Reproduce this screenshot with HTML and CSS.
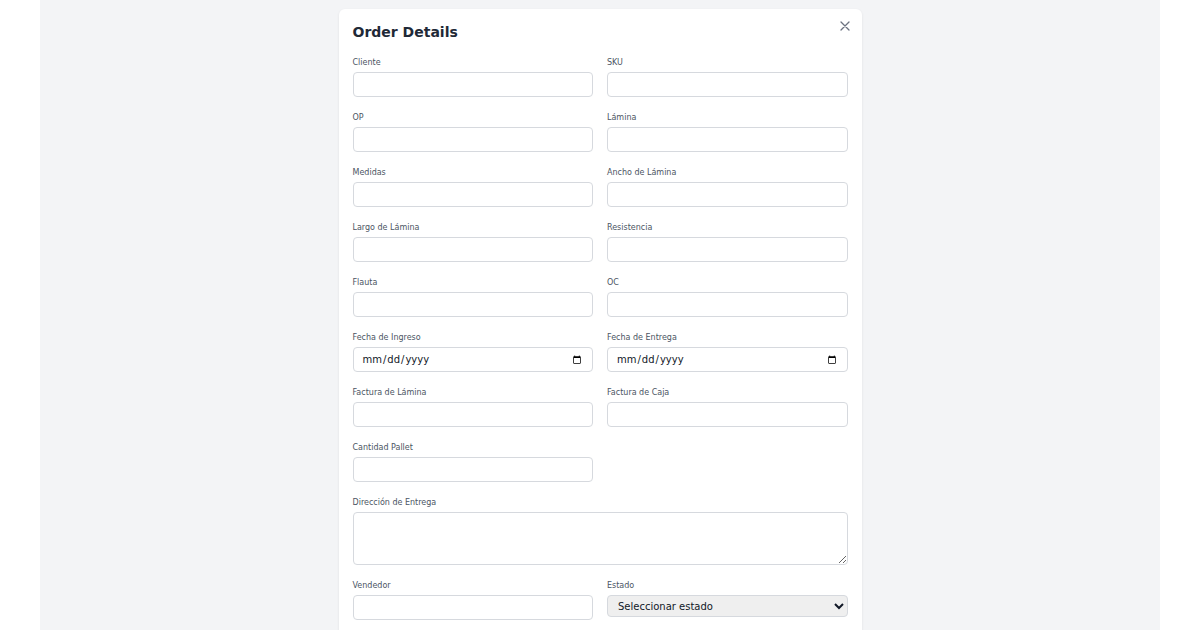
FILE: index.html
```html
<!DOCTYPE html>
<html lang="es">
<head>
  <meta charset="UTF-8" />
  <title>Order Details</title>
  <link rel="stylesheet" href="styles.css">
</head>
<body>
  <div class="page">
    <div class="modal">
      <button class="close-btn" aria-label="Cerrar">
        <svg width="10" height="10" viewBox="0 0 10 10">
          <path d="M1 1 L9 9 M9 1 L1 9" stroke="#6b7280" stroke-width="1.3" stroke-linecap="round" fill="none"/>
        </svg>
      </button>
      <h2 class="modal-title">Order Details</h2>

      <form class="form-grid">
        <div class="field"><label>Cliente</label><input type="text"></div>
        <div class="field"><label>SKU</label><input type="text"></div>
        <div class="field"><label>OP</label><input type="text"></div>
        <div class="field"><label>Lámina</label><input type="text"></div>
        <div class="field"><label>Medidas</label><input type="text"></div>
        <div class="field"><label>Ancho de Lámina</label><input type="text"></div>
        <div class="field"><label>Largo de Lámina</label><input type="text"></div>
        <div class="field"><label>Resistencia</label><input type="text"></div>
        <div class="field"><label>Flauta</label><input type="text"></div>
        <div class="field"><label>OC</label><input type="text"></div>
        <div class="field"><label>Fecha de Ingreso</label><input type="date"></div>
        <div class="field"><label>Fecha de Entrega</label><input type="date"></div>
        <div class="field"><label>Factura de Lámina</label><input type="text"></div>
        <div class="field"><label>Factura de Caja</label><input type="text"></div>
        <div class="field"><label>Cantidad Pallet</label><input type="number"></div>
        <div class="field"></div>
        <div class="field full"><label>Dirección de Entrega</label><textarea></textarea></div>
        <div class="field"><label>Vendedor</label><input type="text"></div>
        <div class="field">
          <label>Estado</label>
          <select>
            <option>Seleccionar estado</option>
            <option>Pendiente</option>
            <option>En proceso</option>
            <option>Entregado</option>
          </select>
        </div>
      </form>
    </div>
  </div>
</body>
</html>
```

FILE: styles.css
```css
* { box-sizing: border-box; font-family: 'DejaVu Sans', sans-serif; }

body {
  margin: 0;
  padding: 0;
  background: #ffffff;
}

.page {
  width: 1120px;
  margin: 0 auto;
  min-height: 100vh;
  background: #f3f4f6;
  padding: 9px 0 40px;
}

.modal {
  position: relative;
  width: 523px;
  margin: 0 auto;
  background: #ffffff;
  border-radius: 6px;
  box-shadow: 0 1px 3px rgba(0, 0, 0, 0.08);
  padding: 13px 14px 24px;
}

.close-btn {
  position: absolute;
  top: 10px;
  right: 10px;
  width: 14px;
  height: 14px;
  padding: 2px;
  border: none;
  background: none;
  cursor: pointer;
  display: flex;
  align-items: center;
  justify-content: center;
}

.modal-title {
  margin: 0 0 15px;
  font-size: 14px;
  line-height: 20px;
  font-weight: bold;
  color: #1f2937;
}

.form-grid {
  display: grid;
  grid-template-columns: 1fr 1fr;
  column-gap: 14px;
  row-gap: 15px;
}

.field { display: flex; flex-direction: column; }
.field.full { grid-column: 1 / 3; }

.field label {
  font-size: 8px;
  line-height: 10px;
  padding-top: 1px;
  color: #4b5563;
  margin-bottom: 4px;
}

.field input,
.field textarea {
  height: 25px;
  width: 100%;
  border: 1px solid #d6d9de;
  border-radius: 4px;
  padding: 0 8px;
  font-size: 10px;
  color: #111827;
  background: #ffffff;
}

.field textarea {
  height: 53px;
  padding: 6px 8px;
  resize: vertical;
}

.field select {
  height: 22px;
  width: 100%;
  border: 1px solid #d6d9de;
  border-radius: 4px;
  padding: 0 6px;
  font-size: 10px;
  color: #111827;
  background-color: #efefef;
}
```
